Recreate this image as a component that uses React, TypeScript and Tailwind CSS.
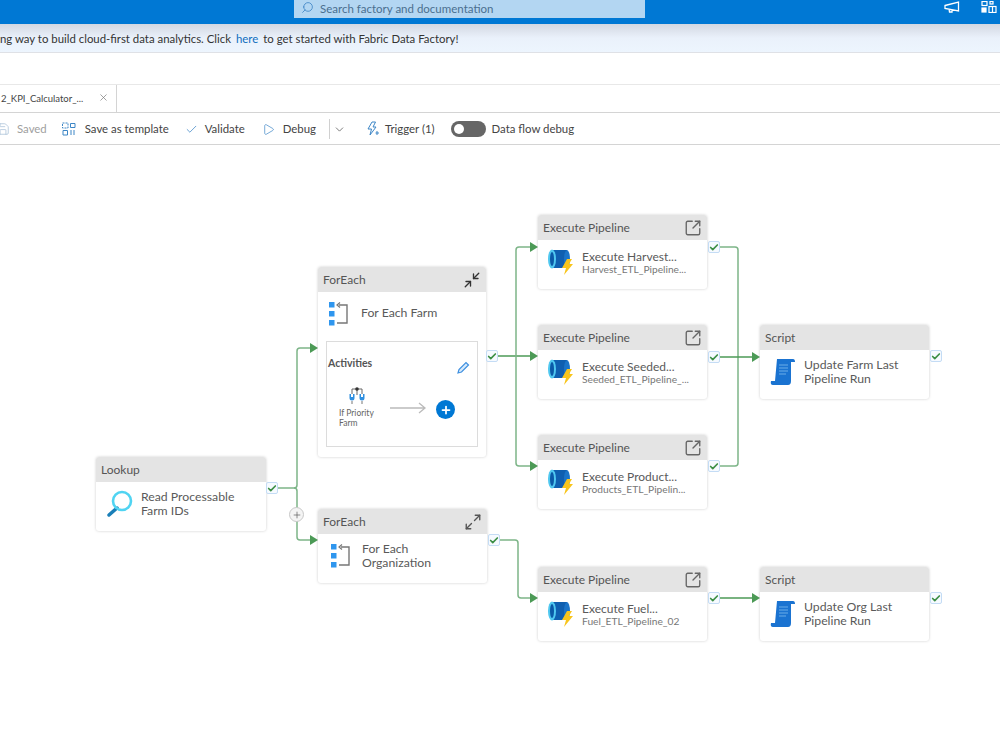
import React from "react";
import { Check, ChevronDown, Play, Save, X, Plus, Maximize2, Minimize2, SquareArrowOutUpRight, Search } from "lucide-react";

const G = "#7db588";

function ExecIcon() {
  return (
    <svg width="27" height="28" viewBox="0 0 27 28" className="shrink-0">
      <path d="M5 2 H20 V20 H5 Z" fill="#0f5fb0" />
      <ellipse cx="20" cy="11" rx="3" ry="9" fill="#1b74c8" />
      <ellipse cx="5" cy="11" rx="4" ry="9.5" fill="#50c8f0" />
      <ellipse cx="5" cy="11" rx="2" ry="7" fill="#0b5aa8" />
      <path d="M20 11 L15 20 H19 L17 27 L26 16 H22 L25 11 Z" fill="#f8c51c" />
    </svg>
  );
}

function ScriptIcon() {
  return (
    <svg width="26" height="28" viewBox="0 0 26 28" className="shrink-0">
      <path d="M7 1 H23 Q25 1 25 4 H21 V23 Q21 27 18 27 H3 Q0 27 1 23 H5 Z" fill="#1a73d1" />
      <path d="M9 7 H18 M9 10 H18 M9 13 H18 M9 16 H16" stroke="#6aaee8" strokeWidth="1" />
    </svg>
  );
}

function LookupIcon() {
  return (
    <svg width="28" height="28" viewBox="0 0 28 28" className="shrink-0">
      <path d="M11 18 L3 25" stroke="#1a7fb8" strokeWidth="3.5" strokeLinecap="round" />
      <circle cx="16" cy="11" r="9" fill="none" stroke="#50d4f2" strokeWidth="2.6" />
    </svg>
  );
}

function ForEachIcon() {
  return (
    <svg width="22" height="26" viewBox="0 0 22 26" className="shrink-0">
      <rect x="1" y="1" width="5.5" height="5.5" fill="#2f96ee" />
      <rect x="1" y="10" width="5.5" height="5.5" fill="#2f96ee" />
      <rect x="1" y="19" width="5.5" height="5.5" fill="#2f96ee" />
      <path d="M11 4 H19 V22 H9" fill="none" stroke="#777" strokeWidth="1.4" />
      <path d="M12 1.5 L9 4 L12 6.5" fill="none" stroke="#777" strokeWidth="1.2" />
    </svg>
  );
}

function IfIcon() {
  return (
    <svg width="20" height="20" viewBox="0 0 20 20">
      <path d="M10 3 H5 V8 M10 3 H15 V8 M10 3 V9" fill="none" stroke="#666" strokeWidth="1" />
      <circle cx="10" cy="3" r="1.8" fill="#333" />
      <path d="M2.5 8 V12 A2.5 2.5 0 0 0 7.5 12 V8 H6 V11 H4 V8 Z" fill="#2f8fe0" />
      <path d="M12.5 8 V12 A2.5 2.5 0 0 0 17.5 12 V8 H16 V11 H14 V8 Z" fill="#2f8fe0" />
      <path d="M5 15 V18 M15 15 V18" stroke="#777" strokeWidth="1" />
    </svg>
  );
}

function PencilIcon() {
  return (
    <svg width="13" height="13" viewBox="0 0 13 13" className="mt-[7px] shrink-0">
      <path d="M1 12 L2 8.5 L9 1.5 L11.5 4 L4.5 11 Z" fill="#d8ebfb" stroke="#3d8fe0" strokeWidth="1.2" />
    </svg>
  );
}

function Node({ x, y, w, h, title, corner, children }: { x: number; y: number; w: number; h: number; title: string; corner?: React.ReactNode; children: React.ReactNode }) {
  return (
    <div
      className="absolute flex flex-col rounded-[3px] bg-white shadow-[0_0_3px_rgba(0,0,0,0.2)]"
      style={{ left: x, top: y - 145, width: w, height: h }}
    >
      <div className="flex h-[25px] shrink-0 items-center justify-between rounded-t-[3px] bg-[#e4e4e4] pl-[5px] pr-[5px] text-[12px] text-[#555]">
        <span>{title}</span>
        {corner}
      </div>
      {children}
    </div>
  );
}

function Body({ icon, children, pl = "pl-[10px]", gap = "gap-[7px]" }: { icon: React.ReactNode; children: React.ReactNode; pl?: string; gap?: string }) {
  return (
    <div className={`flex flex-1 items-center ${pl} ${gap} pb-[5px] text-[12.25px] leading-[14.5px] text-[#5a5a5a]`}>
      {icon}
      <div>{children}</div>
    </div>
  );
}

function Exec({ y, name, sub }: { y: number; name: string; sub: string }) {
  return (
    <Node x={538} y={y} w={169} h={74} title="Execute Pipeline" corner={<SquareArrowOutUpRight size={18} strokeWidth={1.8} color="#666" />}>
      <Body icon={<ExecIcon />} pl="pl-[9px]" gap="gap-[8px]">
        <div className="text-[12px] leading-[13px]">{name}</div>
        <div className="text-[10.2px] leading-[12px] text-[#777]">{sub}</div>
      </Body>
    </Node>
  );
}

function Script({ y, a, b }: { y: number; a: string; b: string }) {
  return (
    <Node x={760} y={y} w={169} h={74} title="Script">
      <Body icon={<ScriptIcon />} pl="pl-[10px]" gap="gap-[8px]">
        <div>{a}</div>
        <div>{b}</div>
      </Body>
    </Node>
  );
}

function Badge({ x, y }: { x: number; y: number }) {
  return (
    <div
      className="absolute flex h-[12px] w-[12px] items-center justify-center rounded-[2px] border border-[#c4dcf5] bg-[#f6faff]"
      style={{ left: x - 6, top: y - 6 - 145 }}
    >
      <Check size={11} strokeWidth={4} color="#3c8f45" />
    </div>
  );
}

function Arrow({ x, y }: { x: number; y: number }) {
  return <path d={`M${x - 8} ${y - 5} L${x} ${y} L${x - 8} ${y + 5} Z`} fill="#4c9a56" />;
}

function Links() {
  return (
    <svg className="absolute inset-0" width="1000" height="605" viewBox="0 145 1000 605">
      <g fill="none" stroke={G} strokeWidth="1.5">
        <path d="M278 488 H294 Q297 488 297 485 V351 Q297 348 300 348 H312" />
        <path d="M294 488 Q297 488 297 491 V537 Q297 540 300 540 H312" />
        <path d="M498 356 H532" stroke="#4c9a56" />
        <path d="M516 356 V250 Q516 247 519 247 H532" />
        <path d="M516 356 V463 Q516 466 519 466 H532" />
        <path d="M720 247 H735 Q738 247 738 250 V463 Q738 466 735 466 H720" />
        <path d="M720 357 H754" stroke="#4c9a56" />
        <path d="M500 540 H515 Q518 540 518 543 V595 Q518 598 521 598 H532" />
        <path d="M720 598 H754" stroke="#4c9a56" />
      </g>
      <Arrow x={318} y={348} />
      <Arrow x={318} y={540} />
      <Arrow x={538} y={247} />
      <Arrow x={538} y={356} />
      <Arrow x={538} y={466} />
      <Arrow x={538} y={598} />
      <Arrow x={760} y={357} />
      <Arrow x={760} y={598} />
    </svg>
  );
}

export default function App() {
  return (
    <div className="relative flex h-[750px] w-[1000px] flex-col overflow-hidden bg-white font-['Lato','Noto_Sans',sans-serif] text-[#444]">
      <div className="flex h-[24px] shrink-0 items-start bg-[#0078d4]">
        <div className="ml-[294px] flex h-[18px] w-[351px] items-center gap-[6px] bg-[#b3d6f2] pl-[7px] text-[11.5px] text-[#4a6f8f]">
          <Search size={13} strokeWidth={1.5} color="#3b82c4" className="-scale-x-100 -translate-y-[2px]" />
          <span>Search factory and documentation</span>
        </div>
        <div className="ml-auto mr-[3px] flex items-start gap-[21px] pt-[1px]">
          <svg width="16" height="12" viewBox="0 0 16 12" fill="none" stroke="#fff" strokeWidth="1.3">
            <path d="M1 4.5 L14.5 1 V10 L1 7.5 Z M5 8 L5.5 11 H8 V9" />
          </svg>
          <svg width="16" height="12" viewBox="0 0 16 12" fill="none" stroke="#fff" strokeWidth="1.2">
            <rect x="1" y="0.5" width="5" height="4" />
            <rect x="9" y="0.5" width="3" height="2.5" />
            <rect x="8" y="5.5" width="7" height="6" />
            <path d="M11.5 5.5 V11.5" />
            <rect x="1" y="7" width="4" height="4" fill="#fff" />
          </svg>
        </div>
      </div>
      <div className="flex h-[29px] shrink-0 items-center whitespace-nowrap border-b border-[#dfe1e6] bg-gradient-to-b from-[#d3d8e2] via-[#eaf1fb] to-[#edf5fe] pt-[2px] text-[11.4px] text-[#333]">
        <span>ng way to build cloud-first data analytics. Click</span>
        <span className="mx-[5px] text-[#106ebe]">here</span>
        <span>to get started with Fabric Data Factory!</span>
      </div>
      <div className="h-[32px] shrink-0 border-b border-[#e8e8e8]" />
      <div className="flex h-[28px] shrink-0 border-b border-[#d4d4d4]">
        <div className="flex w-[117px] items-center border-r border-[#d4d4d4] pl-[1px] pt-[1px] text-[9.5px] text-[#444]">
          <span className="flex-1 whitespace-nowrap">2_KPI_Calculator_...</span>
          <X size={11} strokeWidth={1.5} color="#777" className="mr-[7px] shrink-0 -translate-y-[2px]" />
        </div>
      </div>
      <div className="flex h-[32px] shrink-0 items-center whitespace-nowrap border-b border-[#d4d4d4] pt-[1px] text-[11.4px] text-[#444]">
        <Save size={14} strokeWidth={1.3} color="#a8c0d8" className="ml-[-4px] shrink-0" />
        <span className="ml-[7px] text-[#a0a0a0]">Saved</span>
        <svg width="14" height="14" viewBox="0 0 14 14" fill="none" stroke="#3d86c6" strokeWidth="1" className="ml-[15px] shrink-0">
          <rect x="0.5" y="1" width="5.5" height="5" strokeDasharray="2 1" />
          <path d="M8.5 1.5 H13 V5.5 H8.5 Z M1 8.5 H5.5 V13 H1 Z M9 8 V13 M12 8 V13" />
        </svg>
        <span className="ml-[9px]">Save as template</span>
        <Check size={13} strokeWidth={1.4} color="#3d86c6" className="ml-[16px] shrink-0" />
        <span className="ml-[7px]">Validate</span>
        <Play size={13} strokeWidth={1.3} color="#3d86c6" className="ml-[17px] shrink-0" />
        <span className="ml-[8px]">Debug</span>
        <div className="ml-[13px] h-[20px] w-px bg-[#d0d0d0]" />
        <ChevronDown size={13} strokeWidth={1.4} color="#555" className="ml-[3px] shrink-0" />
        <svg width="14" height="16" viewBox="0 0 14 16" fill="none" stroke="#3d86c6" strokeWidth="1" className="ml-[20px] shrink-0">
          <path d="M6 1 L2 8 H5.5 L4 14 L10 6 H7 L9.5 1 Z" />
          <path d="M11 10 V14 M9.5 12 H13" />
        </svg>
        <span className="ml-[5px]">Trigger (1)</span>
        <div className="ml-[16px] flex h-[16px] w-[35px] shrink-0 items-center rounded-full bg-[#666] pl-[3px]">
          <div className="h-[10px] w-[10px] rounded-full bg-white" />
        </div>
        <span className="ml-[6px]">Data flow debug</span>
      </div>

      <div className="relative flex-1">
        <Links />

        <Node x={96} y={457} w={170} h={74} title="Lookup">
          <Body icon={<LookupIcon />} pl="pl-[10px]" gap="gap-[7px]">
            <div>Read Processable</div>
            <div>Farm IDs</div>
          </Body>
        </Node>

        <Node x={318} y={267} w={168} h={190} title="ForEach" corner={<Minimize2 size={18} strokeWidth={1.8} color="#333" />}>
          <div className="flex h-[49px] shrink-0 items-center gap-[11px] pb-[6px] pl-[10px] text-[12.25px] text-[#5a5a5a]">
            <ForEachIcon />
            <span>For Each Farm</span>
          </div>
          <div className="mx-[8px] flex h-[106px] flex-col border border-[#dcdcdc] px-[1px]">
            <div className="flex items-center justify-between pr-[6px] pt-[12px]">
              <span className="text-[10.5px] font-bold text-[#555]">Activities</span>
              <PencilIcon />
            </div>
            <div className="flex flex-1 items-start pl-[10px] pt-[12px]">
              <div className="flex w-[38px] flex-col items-center text-[8.5px] leading-[9.5px] text-[#666]">
                <IfIcon />
                <div className="mt-[3px] w-[36px]">If Priority Farm</div>
              </div>
              <svg width="38" height="12" viewBox="0 0 38 12" fill="none" stroke="#bbb" strokeWidth="1.3" className="ml-[13px] mt-[16px] shrink-0">
                <path d="M1 6 H36 M30 1 L36 6 L30 11" />
              </svg>
              <div className="ml-[9px] mt-[14px] flex h-[19px] w-[19px] shrink-0 items-center justify-center rounded-full bg-[#0078d4]">
                <Plus size={12} strokeWidth={3.5} color="#fff" />
              </div>
            </div>
          </div>
        </Node>

        <Node x={318} y={509} w={169} h={74} title="ForEach" corner={<Maximize2 size={18} strokeWidth={1.8} color="#555" />}>
          <Body icon={<ForEachIcon />} pl="pl-[12px]" gap="gap-[10px]">
            <div>For Each</div>
            <div>Organization</div>
          </Body>
        </Node>

        <Exec y={215} name="Execute Harvest..." sub="Harvest_ETL_Pipeline..." />
        <Exec y={325} name="Execute Seeded..." sub="Seeded_ETL_Pipeline_..." />
        <Exec y={435} name="Execute Product..." sub="Products_ETL_Pipelin..." />
        <Exec y={567} name="Execute Fuel..." sub="Fuel_ETL_Pipeline_02" />
        <Script y={325} a="Update Farm Last" b="Pipeline Run" />
        <Script y={567} a="Update Org Last" b="Pipeline Run" />

        <Badge x={272} y={488} />
        <Badge x={492} y={356} />
        <Badge x={494} y={540} />
        <Badge x={714} y={247} />
        <Badge x={714} y={357} />
        <Badge x={714} y={466} />
        <Badge x={714} y={598} />
        <Badge x={936} y={356} />
        <Badge x={936} y={598} />

        <div
          className="absolute flex h-[15px] w-[15px] items-center justify-center rounded-full border border-[#c8c8c8] bg-[#f4f4f4]"
          style={{ left: 289, top: 514 - 145 - 7 }}
        >
          <Plus size={10} strokeWidth={1.6} color="#555" />
        </div>
      </div>
    </div>
  );
}
